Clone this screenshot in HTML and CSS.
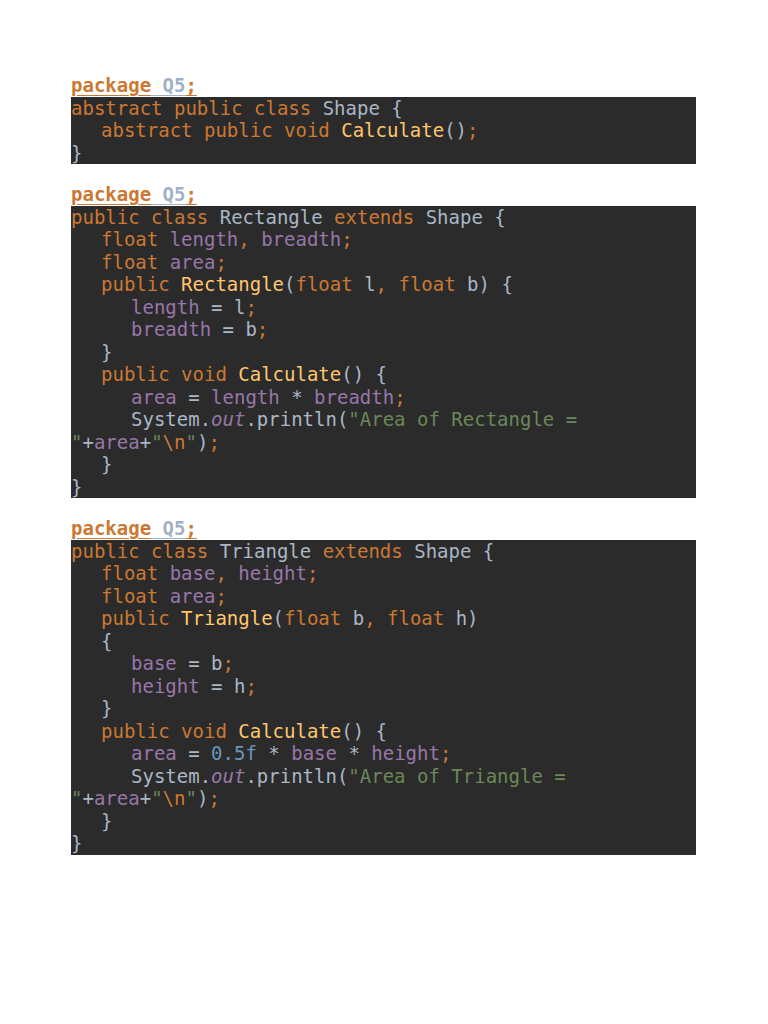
FILE: index.html
```html
<!DOCTYPE html>
<html>
<head>
<meta charset="utf-8">
<link rel="stylesheet" href="styles.css">
</head>
<body>
<main class="doc">
  <section class="file">
    <p class="pkg"><span class="k">package</span><span class="q"> Q5</span><span class="k">;</span></p>
    <div class="code">
      <div class="ln"><span class="k">abstract public class </span>Shape {</div>
      <div class="ln i1"><span class="k">abstract public void </span><span class="m">Calculate</span>()<span class="k">;</span></div>
      <div class="ln">}</div>
    </div>
  </section>

  <section class="file">
    <p class="pkg"><span class="k">package</span><span class="q"> Q5</span><span class="k">;</span></p>
    <div class="code">
      <div class="ln"><span class="k">public class </span>Rectangle <span class="k">extends </span>Shape {</div>
      <div class="ln i1"><span class="k">float </span><span class="f">length</span><span class="k">, </span><span class="f">breadth</span><span class="k">;</span></div>
      <div class="ln i1"><span class="k">float </span><span class="f">area</span><span class="k">;</span></div>
      <div class="ln i1"><span class="k">public </span><span class="m">Rectangle</span>(<span class="k">float </span>l<span class="k">, float </span>b) {</div>
      <div class="ln i2"><span class="f">length </span>= l<span class="k">;</span></div>
      <div class="ln i2"><span class="f">breadth </span>= b<span class="k">;</span></div>
      <div class="ln i1">}</div>
      <div class="ln i1"><span class="k">public void </span><span class="m">Calculate</span>() {</div>
      <div class="ln i2"><span class="f">area </span>= <span class="f">length </span>* <span class="f">breadth</span><span class="k">;</span></div>
      <div class="ln i2">System.<span class="fi">out</span>.println(<span class="s">"Area of Rectangle =</span></div>
      <div class="ln"><span class="s">"</span>+<span class="f">area</span>+<span class="s">"</span><span class="k">\n</span><span class="s">"</span>)<span class="k">;</span></div>
      <div class="ln i1">}</div>
      <div class="ln">}</div>
    </div>
  </section>

  <section class="file">
    <p class="pkg"><span class="k">package</span><span class="q"> Q5</span><span class="k">;</span></p>
    <div class="code">
      <div class="ln"><span class="k">public class </span>Triangle <span class="k">extends </span>Shape {</div>
      <div class="ln i1"><span class="k">float </span><span class="f">base</span><span class="k">, </span><span class="f">height</span><span class="k">;</span></div>
      <div class="ln i1"><span class="k">float </span><span class="f">area</span><span class="k">;</span></div>
      <div class="ln i1"><span class="k">public </span><span class="m">Triangle</span>(<span class="k">float </span>b<span class="k">, float </span>h)</div>
      <div class="ln i1">{</div>
      <div class="ln i2"><span class="f">base </span>= b<span class="k">;</span></div>
      <div class="ln i2"><span class="f">height </span>= h<span class="k">;</span></div>
      <div class="ln i1">}</div>
      <div class="ln i1"><span class="k">public void </span><span class="m">Calculate</span>() {</div>
      <div class="ln i2"><span class="f">area </span>= <span class="n">0.5f </span>* <span class="f">base </span>* <span class="f">height</span><span class="k">;</span></div>
      <div class="ln i2">System.<span class="fi">out</span>.println(<span class="s">"Area of Triangle =</span></div>
      <div class="ln"><span class="s">"</span>+<span class="f">area</span>+<span class="s">"</span><span class="k">\n</span><span class="s">"</span>)<span class="k">;</span></div>
      <div class="ln i1">}</div>
      <div class="ln">}</div>
    </div>
  </section>
</main>
</body>
</html>
```

FILE: styles.css
```css
html, body {
  margin: 0;
  padding: 0;
  background: #ffffff;
}

.doc {
  padding: 74px 0 0 71px;
  width: 625px;
  display: flex;
  flex-direction: column;
  gap: 19px;
  font-family: "DejaVu Sans Mono", "Liberation Mono", monospace;
  font-size: 19px;
  line-height: 22.5px;
}

.file {
  display: flex;
  flex-direction: column;
}

.pkg {
  margin: 0;
  font-weight: bold;
  white-space: pre;
}

.pkg span {
  text-decoration: underline;
  text-underline-offset: 3px;
}

.pkg .k {
  color: #cc7832;
}

.pkg .q {
  color: #9fb1c7;
}

.code {
  background: #2b2b2b;
  color: #a9b7c6;
}

.ln {
  height: 22.5px;
  white-space: pre;
}

.i1 {
  padding-left: 30px;
}

.i2 {
  padding-left: 60px;
}

.k {
  color: #cc7832;
}

.f {
  color: #9876aa;
}

.fi {
  color: #9876aa;
  font-style: italic;
}

.m {
  color: #ffc66d;
}

.s {
  color: #6a8759;
}

.n {
  color: #6897bb;
}
```
